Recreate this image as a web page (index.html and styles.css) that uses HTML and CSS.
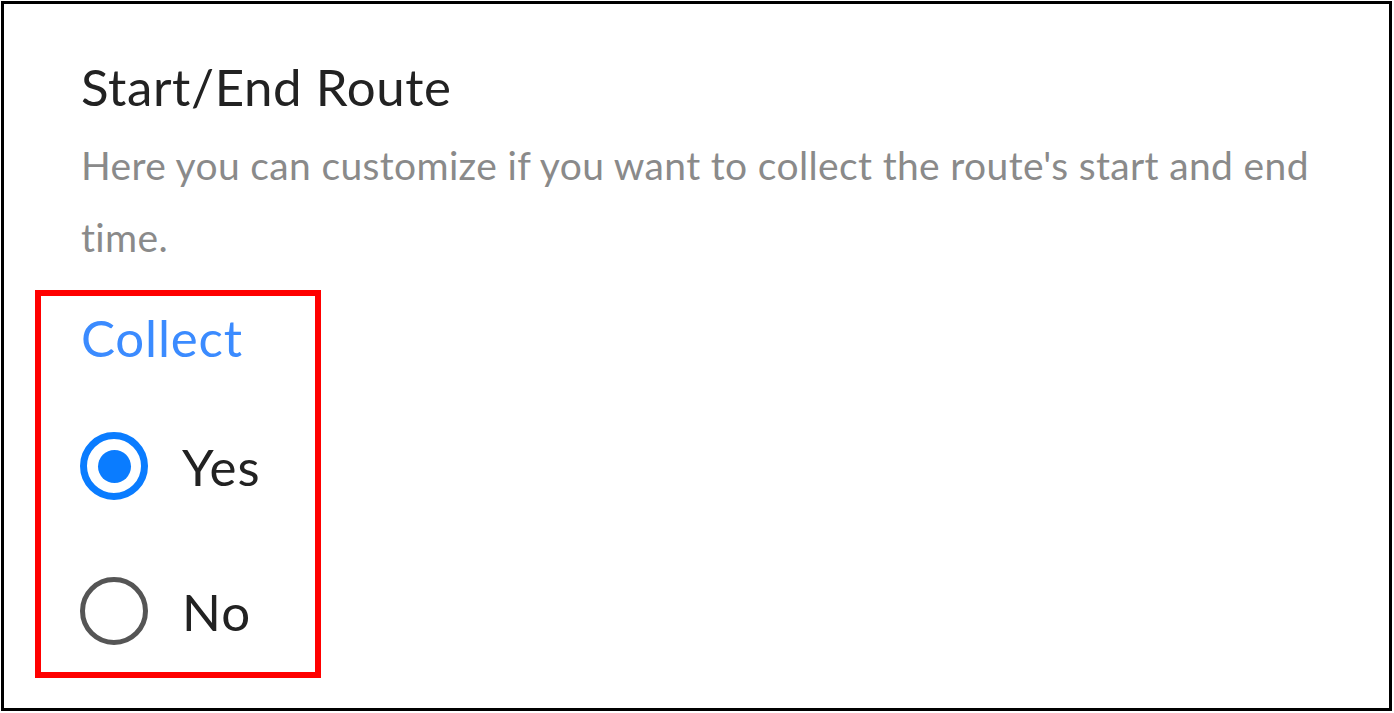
FILE: index.html
```html
<!DOCTYPE html>
<html lang="en">
<head>
    <meta charset="UTF-8">
    <meta name="viewport" content="width=device-width, initial-scale=1.0">
    <title>Start/End Route</title>
    <link rel="stylesheet" href="styles.css">
</head>
<body>
    <div class="frame">
        <h2 class="title">Start/End Route</h2>
        <p class="desc">Here you can customize if you want to collect the route's start and end time.</p>

        <div class="group">
            <div class="group-label">Collect</div>

            <label class="option">
                <input type="radio" name="collect" value="yes" checked>
                <span class="radio"></span>
                <span class="option-text">Yes</span>
            </label>

            <label class="option">
                <input type="radio" name="collect" value="no">
                <span class="radio"></span>
                <span class="option-text">No</span>
            </label>
        </div>
    </div>
</body>
</html>
```

FILE: styles.css
```css
* {
    margin: 0;
    padding: 0;
    box-sizing: border-box;
    font-family: Lato, 'Noto Sans', sans-serif;
}

body {
    background: #fff;
    color: #222;
}

.frame {
    margin: 1px;
    width: 1391px;
    height: 710px;
    border: 3px solid #000;
    padding: 52px 31px 0;
}

.title {
    margin-left: 46px;
    font-size: 51px;
    font-weight: 400;
    line-height: 1.2;
    letter-spacing: 0.6px;
    color: #222;
}

.desc {
    margin: 12px 0 0 46px;
    font-size: 39px;
    line-height: 72px;
    letter-spacing: 0.35px;
    color: #8a8a8a;
    max-width: 1260px;
}

.group {
    margin-top: 17px;
    width: 286px;
    border: 6px solid #ff0000;
    padding: 12px 0 27px 40px;
}

.group-label {
    font-size: 51px;
    line-height: 60px;
    letter-spacing: 0.8px;
    color: #3b8bff;
    margin-bottom: 64px;
}

.option {
    display: flex;
    align-items: center;
    gap: 34px;
    height: 68px;
    cursor: pointer;
}

.option + .option {
    margin-top: 77px;
}

.option input {
    display: none;
}

.radio {
    width: 68px;
    height: 68px;
    margin-left: -1px;
    border-radius: 50%;
    border: 5px solid #555;
    display: flex;
    align-items: center;
    justify-content: center;
    flex-shrink: 0;
}

.option input:checked + .radio {
    border: 7px solid #0a7cff;
}

.option input:checked + .radio::after {
    content: '';
    width: 33px;
    height: 33px;
    border-radius: 50%;
    background: #0a7cff;
}

.option-text {
    font-size: 51px;
    letter-spacing: 1.2px;
    color: #222;
}
```
